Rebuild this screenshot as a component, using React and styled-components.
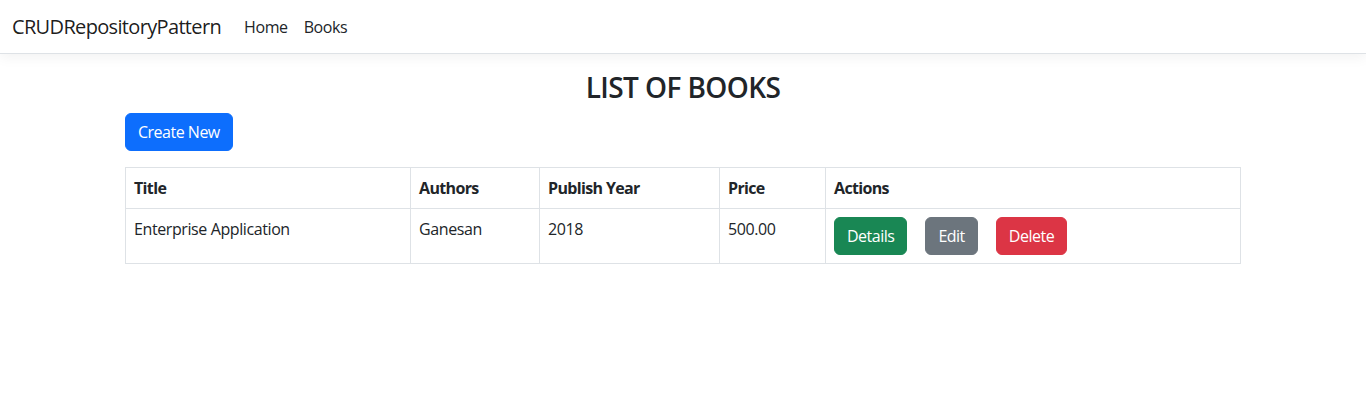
import React from "react";
import styled, { createGlobalStyle } from "styled-components";

const GlobalStyle = createGlobalStyle`
  * { box-sizing: border-box; }
  body {
    margin: 0;
    background: #fff;
    color: #212529;
    font-family: "Open Sans", "Noto Sans", sans-serif;
    font-size: 16px;
    line-height: 1.5;
    letter-spacing: -0.4px;
  }
`;

const Navbar = styled.nav`
  display: flex;
  align-items: center;
  height: 54px;
  padding: 0 12px;
  background: #fff;
  border-bottom: 1px solid #dee2e6;
  box-shadow: 0 4px 12px rgba(0, 0, 0, 0.05);
`;

const Brand = styled.a`
  font-size: 20px;
  color: rgba(0, 0, 0, 0.9);
  text-decoration: none;
  margin-right: 15px;
  letter-spacing: -0.66px;
`;

const NavLink = styled.a`
  padding: 8px;
  color: #212529;
  text-decoration: none;
  font-size: 16px;
`;

const Main = styled.main`
  width: 1140px;
  margin: 17px auto 0;
  padding: 0 12px;
`;

const Heading = styled.h3`
  margin: 0 0 8px;
  font-size: 28px;
  font-weight: 600;
  line-height: 1.2;
  text-align: center;
  letter-spacing: -0.6px;
`;

const ButtonRow = styled.p`
  margin: 0 0 16px;
`;

const variants = {
  primary: "#0d6efd",
  success: "#198754",
  secondary: "#6c757d",
  danger: "#dc3545",
};

const Button = styled.a`
  display: inline-block;
  padding: 6px 12px;
  border-radius: 6px;
  background: ${(p) => variants[p.$variant]};
  color: #fff;
  font-size: 16px;
  line-height: 24px;
  letter-spacing: -0.5px;
  text-decoration: none;
  border: 1px solid ${(p) => variants[p.$variant]};
`;

const Table = styled.table`
  width: 100%;
  border-collapse: collapse;
  border: 1px solid #dee2e6;
`;

const Th = styled.th`
  text-align: left;
  vertical-align: top;
  font-weight: 700;
  letter-spacing: -0.65px;
  padding: 8px;
  border: 1px solid #dee2e6;
  width: ${(p) => p.$w}px;
`;

const Td = styled.td`
  vertical-align: top;
  padding: 8px;
  border: 1px solid #dee2e6;
`;

const Actions = styled.div`
  display: flex;
  gap: 18px;
`;

const books = [
  { title: "Enterprise Application", authors: "Ganesan", year: "2018", price: "500.00" },
];

export default function App() {
  return (
    <>
      <GlobalStyle />
      <Navbar>
        <Brand href="#">CRUDRepositoryPattern</Brand>
        <NavLink href="#">Home</NavLink>
        <NavLink href="#">Books</NavLink>
      </Navbar>
      <Main>
        <Heading>LIST OF BOOKS</Heading>
        <ButtonRow>
          <Button $variant="primary" href="#">Create New</Button>
        </ButtonRow>
        <Table>
          <thead>
            <tr>
              <Th $w={285}>Title</Th>
              <Th $w={129}>Authors</Th>
              <Th $w={180}>Publish Year</Th>
              <Th $w={106}>Price</Th>
              <Th>Actions</Th>
            </tr>
          </thead>
          <tbody>
            {books.map((b) => (
              <tr key={b.title}>
                <Td>{b.title}</Td>
                <Td>{b.authors}</Td>
                <Td>{b.year}</Td>
                <Td>{b.price}</Td>
                <Td>
                  <Actions>
                    <Button $variant="success" href="#">Details</Button>
                    <Button $variant="secondary" href="#">Edit</Button>
                    <Button $variant="danger" href="#">Delete</Button>
                  </Actions>
                </Td>
              </tr>
            ))}
          </tbody>
        </Table>
      </Main>
    </>
  );
}
